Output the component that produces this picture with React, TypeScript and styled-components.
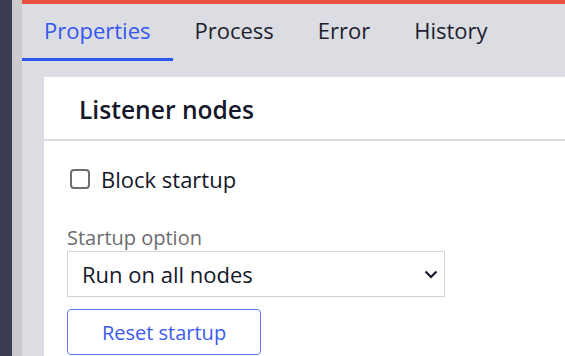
import { useState } from "react";
import styled, { createGlobalStyle } from "styled-components";

const GlobalStyle = createGlobalStyle`
  html, body {
    margin: 0;
    padding: 0;
    width: 100%;
    height: 100%;
    overflow: hidden;
    font-family: "Open Sans", "Noto Sans", sans-serif;
  }
  #root {
    height: 100%;
  }
`;

const Shell = styled.div`
  display: flex;
  height: 100vh;
`;
const NavRail = styled.div`
  width: 12px;
  background: #3b3d52;
`;
const Gutter = styled.div`
  width: 10px;
  background: #cbcbcd;
`;
const Main = styled.div`
  flex: 1;
  display: flex;
  flex-direction: column;
  background: #dcdde2;
  border-top: 4px solid #e8503b;
`;
const Tabs = styled.div`
  display: flex;
  height: 52px;
`;
const Tab = styled.button<{ $active?: boolean }>`
  padding: 0 22px;
  height: 52px;
  border: none;
  border-bottom: 3px solid ${(p) => (p.$active ? "#2d55f0" : "transparent")};
  background: transparent;
  font-family: inherit;
  font-size: 22px;
  color: ${(p) => (p.$active ? "#3557ef" : "#1c1e2d")};
  box-sizing: content-box;
  padding-bottom: 2px;
  cursor: pointer;
`;
const Body = styled.div`
  flex: 1;
  padding: 21px 0 0 22px;
  display: flex;
`;
const Card = styled.section`
  flex: 1;
  background: #fff;
  display: flex;
  flex-direction: column;
`;
const CardHeader = styled.h2`
  margin: 0;
  padding: 3px 35px 0;
  height: 59px;
  display: flex;
  align-items: center;
  font-size: 24.6px;
  font-weight: 600;
  color: #15172a;
  border-bottom: 2px solid #dcdde2;
`;
const CardContent = styled.div`
  padding: 28px 23px 0;
  display: flex;
  flex-direction: column;
`;
const CheckRow = styled.label`
  display: flex;
  align-items: center;
  gap: 11px;
  height: 20px;
  margin-left: 3px;
  font-size: 22px;
  color: #15172a;
  cursor: pointer;
`;
const Box = styled.span`
  width: 20px;
  height: 20px;
  box-sizing: border-box;
  border: 2px solid #6e6e72;
  border-radius: 4px;
`;
const FieldLabel = styled.div`
  margin-top: 35px;
  font-size: 20px;
  color: #6b6b70;
  line-height: 27px;
`;
const Select = styled.div`
  width: 378px;
  height: 46px;
  border: 1px solid #d2d2d6;
  display: flex;
  align-items: center;
  justify-content: space-between;
  padding: 0 6px 0 14px;
  box-sizing: border-box;
  font-size: 22px;
  color: #15172a;
`;
const ResetBtn = styled.button`
  margin-top: 12px;
  width: 194px;
  height: 46px;
  border: 1px solid #5c7cf0;
  border-radius: 4px;
  background: #fff;
  color: #3a5af0;
  font-family: inherit;
  font-size: 20px;
  cursor: pointer;
`;

const tabs = ["Properties", "Process", "Error", "History"];

function App() {
  const [active, setActive] = useState("Properties");
  return (
    <>
      <GlobalStyle />
      <Shell>
        <NavRail />
        <Gutter />
        <Main>
          <Tabs>
            {tabs.map((t) => (
              <Tab key={t} $active={t === active} onClick={() => setActive(t)}>
                {t}
              </Tab>
            ))}
          </Tabs>
          <Body>
            <Card>
              <CardHeader>Listener nodes</CardHeader>
              <CardContent>
                <CheckRow>
                  <Box />
                  Block startup
                </CheckRow>
                <FieldLabel>Startup option</FieldLabel>
                <Select>
                  Run on all nodes
                  <svg width="14" height="9" viewBox="0 0 14 9">
                    <path d="M1.5 1.5 L7 7 L12.5 1.5" fill="none" stroke="#15172a" strokeWidth="2.2" />
                  </svg>
                </Select>
                <ResetBtn>Reset startup</ResetBtn>
              </CardContent>
            </Card>
          </Body>
        </Main>
      </Shell>
    </>
  );
}

export default App;
